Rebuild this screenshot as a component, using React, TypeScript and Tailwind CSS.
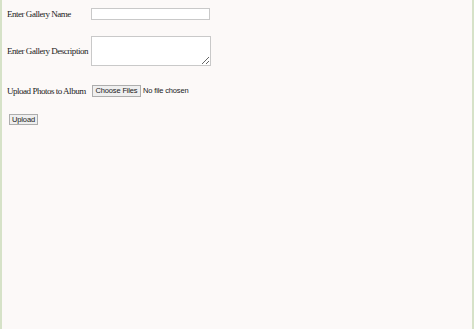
const App = () => {
  return (
    <div className="h-[329px] w-[474px] bg-[#fcf9f8] border-l-2 border-r-2 border-[#d6e2c8] font-['Liberation_Serif',serif] text-[9px] tracking-[-0.48px] text-[#1a1a1a] antialiased">
      <form className="flex flex-col pl-[5px] pt-[8px]">
        {/* nome */}
        <div className="flex h-[12px] items-center">
          <label className="w-[84px] leading-none">Enter Gallery Name</label>
          <input
            type="text"
            className="h-[12px] w-[119px] border border-[#c9c9c9] bg-white"
          />
        </div>

        {/* descricao */}
        <div className="mt-[16px] flex h-[30px] items-center">
          <label className="w-[84px] leading-none">Enter Gallery Description</label>
          <textarea className="h-[30px] w-[120px] resize border border-[#c9c9c9] bg-white" />
        </div>

        {/* fotos */}
        <div className="mt-[19px] flex h-[12px] items-center">
          <label className="w-[85px] leading-none">Upload Photos to Album</label>
          <div className="flex items-center gap-[2px] font-['Liberation_Sans',sans-serif] text-[7.5px] tracking-[-0.15px]">
            <span className="flex h-[12px] w-[49px] items-center justify-center border border-[#adadad] bg-[#efefef] leading-none">
              Choose Files
            </span>
            <span className="leading-none">No file chosen</span>
          </div>
        </div>

        <div className="mt-[17px] flex">
          <button
            type="button"
            className="ml-[2px] flex h-[11px] w-[29px] items-center justify-center border border-[#adadad] bg-[#efefef] font-['Liberation_Sans',sans-serif] text-[7.5px] tracking-[-0.15px] leading-none"
          >
            Upload
          </button>
        </div>
      </form>
    </div>
  );
};

export default App;
